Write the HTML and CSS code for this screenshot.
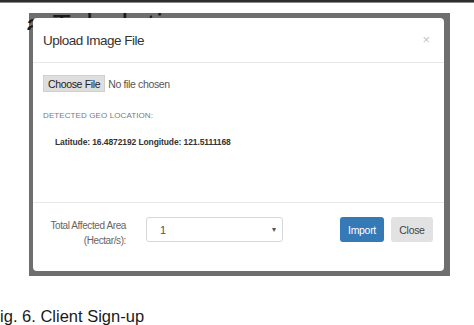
FILE: index.html
```html
<!DOCTYPE html>
<html lang="en">
<head>
    <meta charset="UTF-8">
    <meta name="viewport" content="width=device-width, initial-scale=1.0">
    <title>Upload Image File</title>
    <link rel="stylesheet" href="styles.css">
</head>
<body>
    <div class="topbar"></div>
    <div class="stage">
        <div class="shade"></div>
        <h2 class="behind">a Tabulation</h2>
        <div class="modal">
            <div class="modal-header">
                <h4 class="modal-title">Upload Image File</h4>
                <span class="close-x">&times;</span>
            </div>
            <div class="modal-body">
                <div class="file-row">
                    <span class="file-btn">Choose File</span>
                    <span class="file-name">No file chosen</span>
                </div>
                <p class="geo-label">DETECTED GEO LOCATION:</p>
                <p class="geo-value">Latitude: 16.4872192 Longitude: 121.5111168</p>
            </div>
            <div class="modal-footer">
                <label class="area-label">Total Affected Area (Hectar/s):</label>
                <div class="select-box">
                    <span>1</span>
                    <span class="caret">&#9662;</span>
                </div>
                <div class="actions">
                    <button class="btn btn-primary">Import</button>
                    <button class="btn btn-default">Close</button>
                </div>
            </div>
        </div>
    </div>
    <p class="caption">Fig. 6. Client Sign-up</p>
</body>
</html>
```

FILE: styles.css
```css
body {
    margin: 0;
    font-family: 'Liberation Sans', Arial, sans-serif;
    background-color: white;
    color: #333;
}

.topbar {
    height: 2px;
    background-color: #2e2e2e;
    border-bottom: 1px solid #8a8a8a;
}

.stage {
    display: grid;
    width: 421px;
    margin: 10px 0 0 29px;
}

.shade,
.behind,
.modal {
    grid-area: 1 / 1;
}

.shade {
    background-color: #6f6f6f;
    height: 263px;
}

/* heading of the page behind the dialog, mostly hidden */
.behind {
    position: relative;
    z-index: 1;
    height: 20px;
    overflow: hidden;
    margin: -3px 0 0 -3px;
    font-size: 30px;
    line-height: 30px;
    font-weight: normal;
    color: #1a1a1a;
    letter-spacing: 1px;
}

.modal {
    position: relative;
    z-index: 2;
    margin: 5px 6px 5px 4px;
    height: 253px;
    background-color: white;
    border-radius: 4px;
    display: flex;
    flex-direction: column;
}

.modal-header {
    display: flex;
    justify-content: space-between;
    align-items: center;
    height: 44px;
    padding: 0 14px 0 10px;
    border-bottom: 1px solid #e8e8e8;
}

.modal-title {
    margin: 0;
    font-size: 13.5px;
    font-weight: normal;
    letter-spacing: -0.5px;
    color: #333;
}

.close-x {
    font-size: 13px;
    color: #c4c4c4;
    margin-top: -2px;
}

.modal-body {
    height: 139px;
    padding: 12px 10px 0;
    box-sizing: border-box;
}

.file-row {
    display: flex;
    align-items: center;
    gap: 3px;
    font-size: 10.5px;
    letter-spacing: -0.35px;
}

.file-btn {
    display: flex;
    align-items: center;
    height: 17px;
    padding: 0 4px;
    background-color: #dedede;
    border: 1px solid #d0d0d0;
    color: #222;
    box-sizing: border-box;
}

.file-name {
    color: #555;
}

.geo-label {
    margin: 19px 0 0;
    font-size: 8px;
    color: #7a7a7a;
    letter-spacing: 0.1px;
}

.geo-value {
    margin: 17px 0 0 12px;
    font-size: 8.5px;
    font-weight: bold;
    color: #333;
    letter-spacing: -0.1px;
}

.modal-footer {
    flex: 1;
    display: flex;
    align-items: flex-start;
    padding: 14px 11px 0 12px;
    border-top: 1px solid #e8e8e8;
}

.area-label {
    width: 81px;
    font-size: 10px;
    line-height: 15px;
    text-align: right;
    color: #666;
    letter-spacing: -0.4px;
    margin-top: 1px;
}

.select-box {
    display: flex;
    justify-content: space-between;
    align-items: center;
    width: 137px;
    height: 25px;
    margin-left: 20px;
    padding: 0 6px 0 13px;
    box-sizing: border-box;
    border: 1px solid #d6d6d6;
    border-radius: 3px;
    font-size: 11px;
    color: #555;
}

.caret {
    font-size: 8px;
    color: #555;
}

.actions {
    display: flex;
    gap: 7px;
    margin-left: auto;
}

.btn {
    height: 25px;
    border: none;
    border-radius: 3px;
    font-family: inherit;
    font-size: 10.5px;
    letter-spacing: -0.3px;
    padding: 0;
}

.btn-primary {
    width: 44px;
    background-color: #3579b6;
    color: white;
}

.btn-default {
    width: 42px;
    background-color: #e2e2e2;
    color: #444;
}

.caption {
    margin: 31px 0 0 -10px;
    font-size: 16.5px;
    color: #1a1a1a;
}
```
